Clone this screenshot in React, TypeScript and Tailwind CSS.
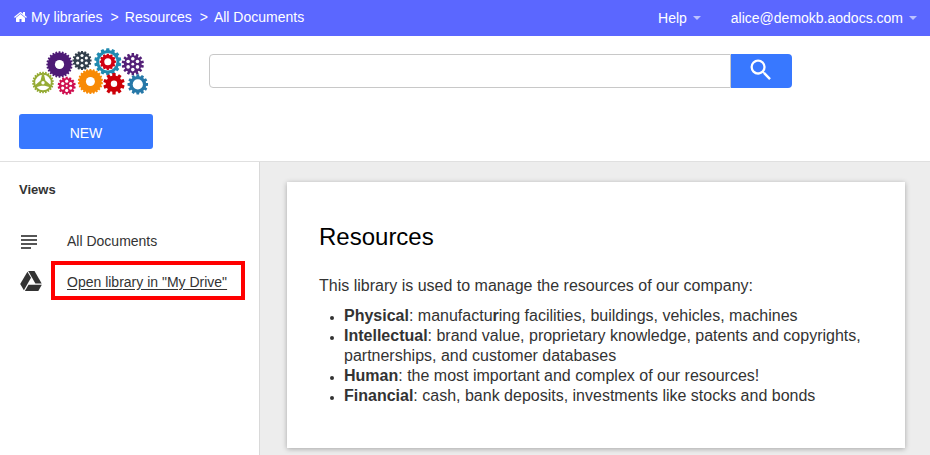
import type { ReactNode } from "react";
import { MdSearch } from "react-icons/md";

type GearProps = {
  cx: number;
  cy: number;
  r: number;
  root: number;
  teeth: number;
  color: string;
  children?: ReactNode;
};

function gearPath(cx: number, cy: number, outer: number, root: number, teeth: number) {
  const step = (Math.PI * 2) / teeth;
  const points: string[] = [];
  for (let i = 0; i < teeth; i++) {
    const a = i * step - Math.PI / 2;
    const corners: [number, number][] = [
      [root, -0.34],
      [outer, -0.24],
      [outer, 0.24],
      [root, 0.34],
    ];
    for (const [radius, offset] of corners) {
      const t = a + offset * step;
      points.push(`${(cx + radius * Math.cos(t)).toFixed(2)} ${(cy + radius * Math.sin(t)).toFixed(2)}`);
    }
  }
  return `M${points.join("L")}Z`;
}

function Gear({ cx, cy, r, root, teeth, color, children }: GearProps) {
  return (
    <g>
      <path d={gearPath(cx, cy, r, root, teeth)} fill={color} />
      {children}
    </g>
  );
}

function Holes({ cx, cy, ring, size, count }: { cx: number; cy: number; ring: number; size: number; count: number }) {
  return (
    <g fill="#fff">
      {Array.from({ length: count }, (_, i) => {
        const a = (i / count) * Math.PI * 2 - Math.PI / 2;
        return <circle key={i} cx={cx + ring * Math.cos(a)} cy={cy + ring * Math.sin(a)} r={size} />;
      })}
    </g>
  );
}

function Logo() {
  return (
    <svg className="h-[50px] w-[118px]" viewBox="31 47 118 50" role="img" aria-label="Gears logo">
      <Gear cx={59.5} cy={64.5} r={13.2} root={11.8} teeth={24} color="#4d1a75">
        <circle cx={59.5} cy={64.5} r={4.6} fill="#fff" />
      </Gear>
      <Gear cx={82} cy={60.5} r={9.6} root={8.2} teeth={16} color="#323e4b">
        <Holes cx={82} cy={60.5} ring={5} size={1.6} count={6} />
        <circle cx={82} cy={60.5} r={1.4} fill="#fff" />
      </Gear>
      <Gear cx={107.8} cy={61.8} r={13.6} root={11.6} teeth={14} color="#208ab0">
        <circle cx={107.8} cy={61.8} r={8.7} fill="#fff" />
      </Gear>
      <Gear cx={107.8} cy={61.8} r={8.2} root={7} teeth={12} color="#d10012">
        <circle cx={107.8} cy={61.8} r={3.5} fill="#fff" />
      </Gear>
      <Gear cx={132.8} cy={64.2} r={11.2} root={8.8} teeth={14} color="#542078">
        <Holes cx={132.8} cy={64.2} ring={5.4} size={1.8} count={6} />
        <circle cx={132.8} cy={64.2} r={1.4} fill="#fff" />
      </Gear>
      <Gear cx={43} cy={82.5} r={10.9} root={9.6} teeth={22} color="#95ab35">
        <circle cx={43} cy={82.5} r={7.8} fill="#fff" />
        <path d="M42 74.5h2l1.4 6 5.6 4.8-1 2-5.2-1.5h-3.6l-5.2 1.5-1-2 5.6-4.8z" fill="#95ab35" />
        <circle cx={43} cy={82.8} r={1.7} fill="#fff" />
      </Gear>
      <Gear cx={66.7} cy={85.8} r={9.1} root={7.6} teeth={14} color="#cf1050">
        <Holes cx={66.7} cy={85.8} ring={4.6} size={1.6} count={6} />
        <circle cx={66.7} cy={85.8} r={1.1} fill="#fff" />
      </Gear>
      <Gear cx={90.4} cy={81.5} r={12.6} root={11.3} teeth={22} color="#f88a05">
        <circle cx={90.4} cy={81.5} r={4.5} fill="#fff" />
      </Gear>
      <Gear cx={114} cy={83.8} r={10.8} root={8.2} teeth={10} color="#cc0008">
        <circle cx={114} cy={83.8} r={3.2} fill="#fff" />
      </Gear>
      <Gear cx={137.8} cy={84.4} r={10.3} root={8.4} teeth={12} color="#2678a8">
        <circle cx={137.8} cy={84.4} r={5.1} fill="#fff" />
      </Gear>
    </svg>
  );
}

function HomeIcon() {
  return (
    <svg className="h-[14px] w-[13px]" viewBox="0 0 1664 1792" fill="currentColor" aria-hidden="true">
      <path d="M1408 992v480q0 26-19 45t-45 19h-384v-384h-256v384h-384q-26 0-45-19t-19-45v-480q0-1 .5-3t.5-3l575-474 575 474q1 2 1 6zm223-69l-62 74q-8 9-21 11h-3q-13 0-21-7l-692-577-692 577q-12 8-24 7-13-2-21-11l-62-74q-8-10-7-23.500t11-21.500l719-599q32-26 76-26t76 26l244 204v-195q0-14 9-23t23-9h192q14 0 23 9t9 23v408l219 182q10 8 11 21.500t-7 23.500z" />
    </svg>
  );
}

function Caret() {
  return (
    <svg className="h-1 w-2" viewBox="0 0 8 4" aria-hidden="true">
      <path d="M0 0h8L4 4z" fill="#bcc2ff" />
    </svg>
  );
}

function ListIcon() {
  return (
    <svg className="h-[14px] w-4" viewBox="0 0 16 14" fill="#555" aria-hidden="true">
      <path d="M0 0h16v2H0zM0 4h16v2H0zM0 8h16v2H0zM0 12h10v2H0z" />
    </svg>
  );
}

function DriveIcon() {
  return (
    <svg className="h-5 w-[22px]" viewBox="0 0 22 20" fill="#333" aria-hidden="true">
      <path d="M7.4.7 11 6.800 3.900 19.300.2 13z" />
      <path d="M8.200.1h6.300l7.200 12.400h-6.300z" />
      <path d="M8.500 13.700h13.300l-3.500 6.200H4.900z" />
    </svg>
  );
}

const resources: { name: string; text: ReactNode }[] = [
  {
    name: "Physical",
    text: (
      <>
        : manufactu<b>r</b>ing facilities, buildings, vehicles, machines
      </>
    ),
  },
  {
    name: "Intellectual",
    text: ": brand value, proprietary knowledge, patents and copyrights, partnerships, and customer databases",
  },
  { name: "Human", text: ": the most important and complex of our resources!" },
  { name: "Financial", text: ": cash, bank deposits, investments like stocks and bonds" },
];

export default function App() {
  return (
    <div className="flex min-h-screen flex-col bg-white font-['Liberation_Sans',Arial,sans-serif] text-sm text-[#333]">
      <header className="flex h-9 items-center justify-between bg-[#5b67ff] pr-[13px] pl-[14px] text-white">
        <nav aria-label="Breadcrumb" className="flex items-center pb-0.5">
          <a href="#libraries" className="flex items-center gap-1">
            <HomeIcon />
            My libraries
          </a>
          <span className="mr-1.5 ml-2">&gt;</span>
          <a href="#resources">Resources</a>
          <span className="mr-1.5 ml-2">&gt;</span>
          <a href="#all">All Documents</a>
        </nav>
        <div className="flex items-center gap-[30px]">
          <button type="button" className="flex items-center gap-1.5">
            Help
            <Caret />
          </button>
          <button type="button" className="flex items-center gap-1.5">
            alice@demokb.aodocs.com
            <Caret />
          </button>
        </div>
      </header>

      <div className="border-b border-[#e0e0e0] pb-3">
        <div className="flex items-start pt-[11px]">
          <div className="w-[209px] shrink-0 pl-[31px]">
            <Logo />
          </div>
          <form role="search" className="mt-[7px] mr-6 flex h-[34px] w-full max-w-[583px]">
            <input
              type="text"
              aria-label="Search"
              className="min-w-0 flex-1 rounded-l border border-[#c8c8c8] bg-white px-3 outline-none"
            />
            <button
              type="button"
              aria-label="Search"
              className="flex w-[61px] items-center justify-center rounded-r bg-[#3878ff] pr-0.5 pb-0.5 text-white"
            >
              <MdSearch className="size-7" />
            </button>
          </form>
        </div>
        <button
          type="button"
          className="mt-[17px] ml-[19px] flex h-[35px] w-[134px] items-center justify-center rounded-[3px] bg-[#3878ff] pt-0.5 text-white"
        >
          NEW
        </button>
      </div>

      <div className="flex flex-1">
        <aside className="w-[260px] shrink-0 border-r border-[#d9d9d9] pt-5">
          <h2 className="pl-[19px] text-[13px] leading-4 font-bold">Views</h2>
          <nav aria-label="Views" className="mt-6">
            <a href="#all" className="flex h-[39px] items-center pl-[21px]">
              <ListIcon />
              <span className="ml-[30px] pb-0.5">All Documents</span>
            </a>
            <div className="flex h-[39px] items-center pl-5">
              <DriveIcon />
              <a
                href="#drive"
                className="ml-[9px] flex h-[39px] w-[194px] items-center border-4 border-[#ff0000] px-3 pt-0.5 underline underline-offset-2"
              >
                Open library in "My Drive"
              </a>
            </div>
          </nav>
        </aside>

        <main className="flex-1 bg-[#ededed] pt-5 pr-[25px] pb-[7px] pl-[27px]">
          <article className="bg-white px-8 pt-10 pb-[42px] text-base leading-5 shadow-[0_1px_5px_rgba(0,0,0,0.3)]">
            <h1 className="text-2xl leading-[30px] text-black">Resources</h1>
            <p className="mt-6">This library is used to manage the resources of our company:</p>
            <ul className="mt-[10px] list-disc pl-[25px] marker:text-xs">
              {resources.map((item) => (
                <li key={item.name}>
                  <strong>{item.name}</strong>
                  {item.text}
                </li>
              ))}
            </ul>
          </article>
        </main>
      </div>
    </div>
  );
}
